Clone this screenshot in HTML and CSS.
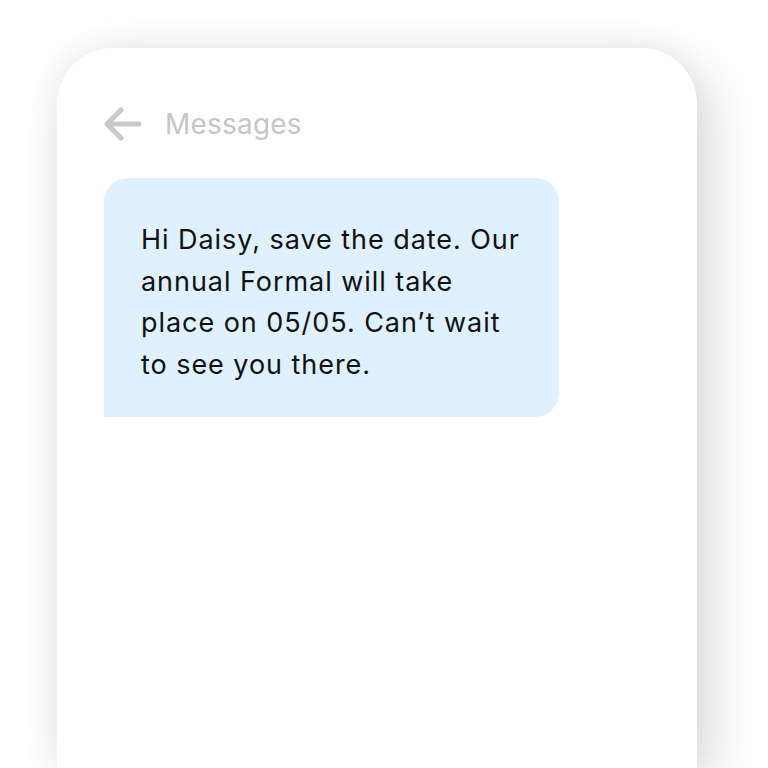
FILE: index.html
```html
<!DOCTYPE html>
<html>
<head>
<meta charset="utf-8">
<link rel="stylesheet" href="styles.css">
</head>
<body>
<div class="stage">
  <div class="phone">
    <div class="header">
      <svg class="back" width="38" height="34" viewBox="0 0 38 34">
        <path d="M3 17 H35 M17 3 L3 17 L17 31" fill="none" stroke="#c9c9c9" stroke-width="5" stroke-linecap="round" stroke-linejoin="round"/>
      </svg>
      <span class="title">Messages</span>
    </div>
    <div class="bubble">Hi Daisy, save the date. Our annual Formal will take place on 05/05. Can’t wait to see you there.</div>
  </div>
</div>
</body>
</html>
```
FILE: styles.css
```css
html, body {
  margin: 0;
  padding: 0;
  background: #ffffff;
  width: 768px;
  height: 768px;
  overflow: hidden;
}
.stage {
  padding: 48px 0 0 57px;
}
.phone {
  width: 640px;
  height: 720px;
  background: #ffffff;
  border-radius: 56px 56px 0 0;
  box-shadow: 18px 14px 50px rgba(0, 0, 0, 0.13), -6px -2px 36px rgba(0, 0, 0, 0.06);
  padding: 58px 0 0 47px;
  box-sizing: border-box;
  font-family: "Inter", "Noto Sans", sans-serif;
}
.header {
  display: flex;
  align-items: center;
  gap: 23px;
  height: 36px;
}
.back {
  display: block;
}
.title {
  font-size: 28px;
  color: #c6c6c6;
  letter-spacing: 0.2px;
}
.bubble {
  margin-top: 36px;
  width: 455px;
  box-sizing: border-box;
  background: #dff0fe;
  border-radius: 24px 24px 24px 0;
  padding: 41px 30px 32px 37px;
  font-size: 27px;
  line-height: 41.5px;
  letter-spacing: 0.95px;
  color: #111111;
}
```
